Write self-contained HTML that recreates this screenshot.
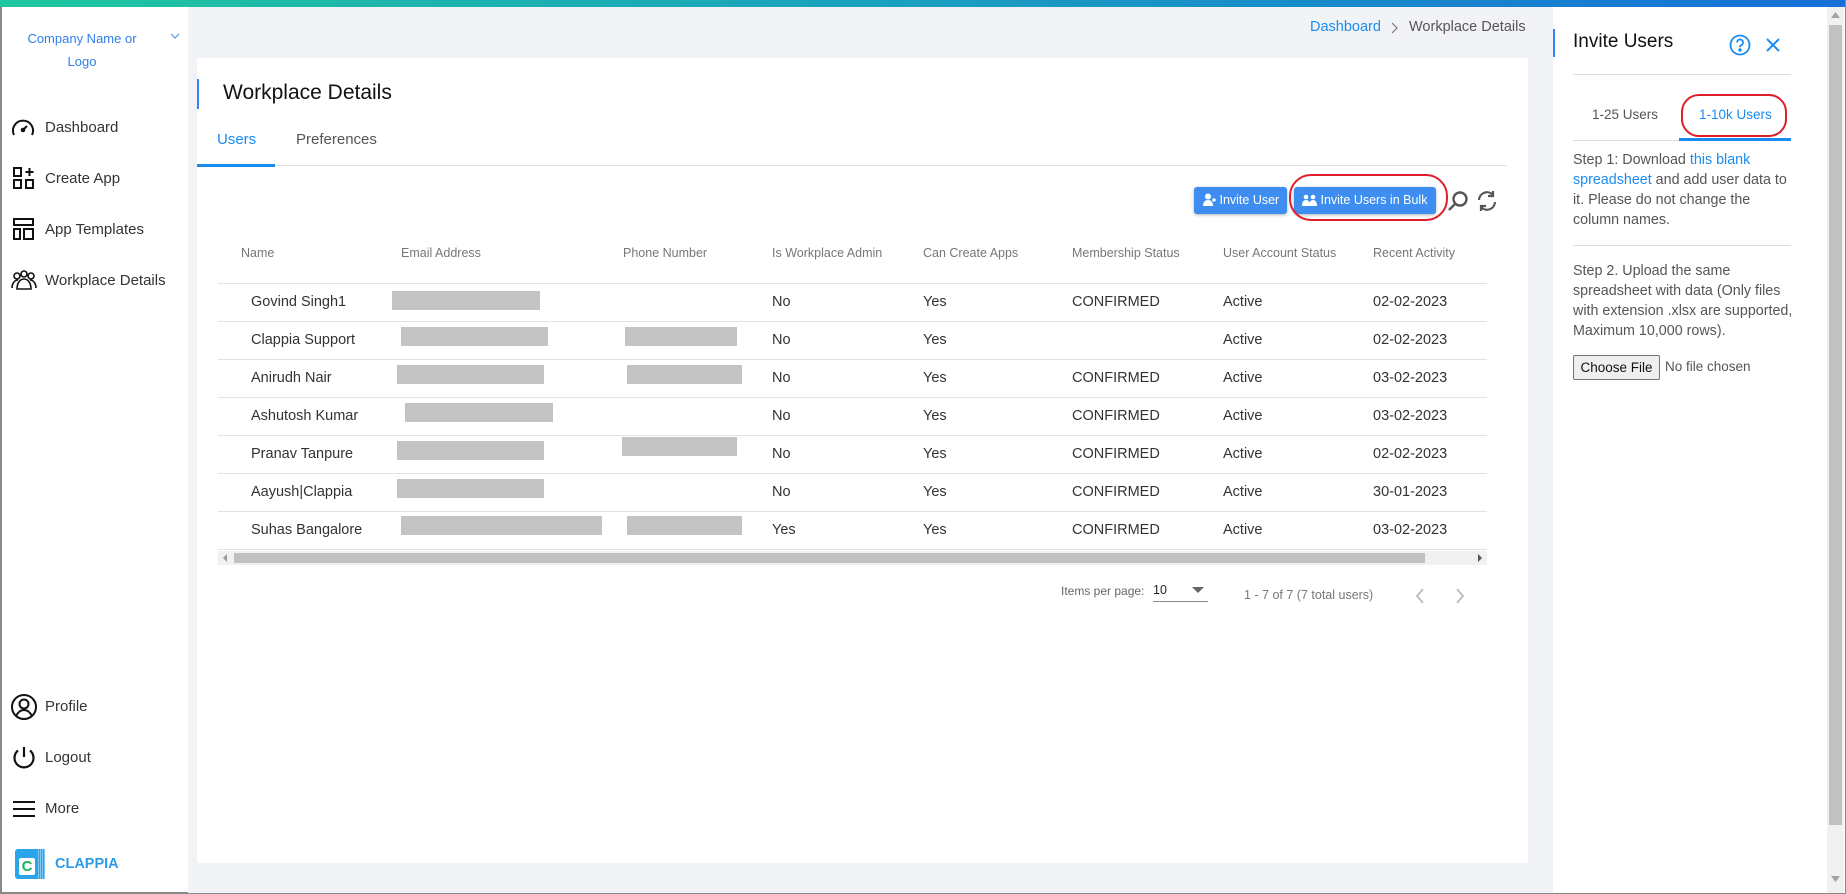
<!DOCTYPE html>
<html><head><meta charset="utf-8"><style>
*{box-sizing:border-box;margin:0;padding:0}
body{width:1846px;height:894px;overflow:hidden;background:#f2f3f6;font-family:"Liberation Sans",sans-serif;position:relative;color:#333}
.a{position:absolute;white-space:nowrap}
.top{left:0;top:0;width:1846px;height:7px;background:linear-gradient(90deg,#1fc79e,#1a9fc0 50%,#1670d8)}
.side{left:0;top:7px;width:188px;height:887px;background:#fff;border-left:2px solid #8a8a8a;border-bottom:2px solid #8a8a8a}
.nav{font-size:15px;color:#333}
.card{left:197px;top:58px;width:1331px;height:805px;background:#fff}
.th{font-size:12.5px;color:#777;top:246px}
.td{font-size:14.5px;color:#333}
.hl{left:218px;width:1269px;height:1px;background:#e2e2e2}
.red{background:#c3c3c3;height:19px}
.btn{background:#3d8ef0;color:#fff;font-size:12.5px;border-radius:3px;height:27px;top:187px;line-height:27px;box-shadow:0 1px 3px rgba(0,0,0,.3)}
.panel{left:1553px;top:7px;width:257px;height:887px;background:#fff}
.pt{font-size:14.3px;color:#555;line-height:20px;width:222px;white-space:normal}
.blue{color:#1a8cf0}
</style></head><body>
<div class="a top"></div>
<div class="a side"></div>
<div class="a" style="left:26px;top:27px;font-size:13px;color:#2f7fe8;text-align:center;width:112px;line-height:23px">Company Name or<br>Logo</div>
<svg class="a" style="left:170px;top:32px" width="10" height="8"><path d="M1 2l4 4 4-4" stroke="#5a8fe0" fill="none" stroke-width="1.2"/></svg>
<svg class="a" style="left:11px;top:115px" width="24" height="24" viewBox="0 0 24 24" fill="none" stroke="#111" stroke-width="2"><path d="M3 20A10 10 0 1 1 21 20"/><path d="M12 15l4-4"/><circle cx="12" cy="15" r="1.3" fill="#111"/></svg>
<div class="a nav" style="left:45px;top:119px">Dashboard</div>
<svg class="a" style="left:13px;top:167px" width="22" height="22" viewBox="0 0 22 22" fill="none" stroke="#111" stroke-width="2"><rect x="1" y="1" width="7" height="8"/><rect x="1" y="13" width="7" height="8"/><rect x="13" y="13" width="7" height="8"/><path d="M16.5 1v8M12.5 5h8"/></svg>
<div class="a nav" style="left:45px;top:170px">Create App</div>
<svg class="a" style="left:13px;top:218px" width="22" height="22" viewBox="0 0 22 22" fill="none" stroke="#111" stroke-width="2"><rect x="1" y="1" width="19" height="6"/><rect x="1" y="11" width="6" height="10"/><rect x="11" y="11" width="9" height="10"/></svg>
<div class="a nav" style="left:45px;top:221px">App Templates</div>
<svg class="a" style="left:11px;top:270px" width="26" height="20" viewBox="0 0 26 20" fill="none" stroke="#111" stroke-width="1.6"><circle cx="6" cy="6" r="3"/><circle cx="13" cy="4" r="3"/><circle cx="20" cy="6" r="3"/><path d="M1 18c0-5 3-8 6-8M25 18c0-5-3-8-6-8M6 19c0-6 3-10 7-10s7 4 7 10z"/></svg>
<div class="a nav" style="left:45px;top:272px">Workplace Details</div>
<svg class="a" style="left:11px;top:694px" width="26" height="26" viewBox="0 0 26 26" fill="none" stroke="#111" stroke-width="2"><circle cx="13" cy="13" r="12"/><circle cx="13" cy="10" r="4.5"/><path d="M5 22c2-4 5-6 8-6s6 2 8 6"/></svg>
<div class="a nav" style="left:45px;top:698px">Profile</div>
<svg class="a" style="left:12px;top:746px" width="24" height="24" viewBox="0 0 24 24" fill="none" stroke="#111" stroke-width="2.2"><path d="M12 1v10M6 4.5A9.5 9.5 0 1 0 18 4.5"/></svg>
<div class="a nav" style="left:45px;top:749px">Logout</div>
<svg class="a" style="left:12px;top:800px" width="24" height="18" viewBox="0 0 24 18" stroke="#111" stroke-width="2"><path d="M1 2h22M1 9h22M1 16h22"/></svg>
<div class="a nav" style="left:45px;top:800px">More</div>
<div class="a" style="left:15px;top:849px;width:30px;height:30px;background:#2aa4ea;border-radius:3px"></div>
<div class="a" style="left:38px;top:849px;width:7px;height:30px;background:repeating-linear-gradient(90deg,#7cc8f3 0 1px,#2aa4ea 1px 2px)"></div>
<div class="a" style="left:19px;top:858px;width:16px;height:17px;background:#fff;border-radius:2px;color:#1bb35c;font-weight:bold;font-size:15px;line-height:17px;text-align:center">C</div>
<div class="a" style="left:55px;top:856px;font-size:14.5px;font-weight:bold;color:#2d9ae6">CLAPPIA</div>
<div class="a" style="left:1310px;top:19px;font-size:14.5px;color:#1a8cf0">Dashboard</div>
<svg class="a" style="left:1391px;top:22px" width="8" height="12"><path d="M1 1l5 5-5 5" stroke="#777" fill="none" stroke-width="1.2"/></svg>
<div class="a" style="left:1409px;top:19px;font-size:14.5px;color:#555">Workplace Details</div>
<div class="a card"></div>
<div class="a" style="left:197px;top:79px;width:2px;height:30px;background:#2f86f0"></div>
<div class="a" style="left:223px;top:81px;font-size:21px;color:#111">Workplace Details</div>
<div class="a" style="left:217px;top:131px;font-size:15px;color:#1a8cf0">Users</div>
<div class="a" style="left:296px;top:131px;font-size:15px;color:#555">Preferences</div>
<div class="a" style="left:197px;top:165px;width:1310px;height:1px;background:#e0e0e0"></div>
<div class="a" style="left:197px;top:164px;width:78px;height:3px;background:#1a8cf0"></div>
<div class="a btn" style="left:1194px;width:93px;padding-left:9px">
<svg width="13" height="13" viewBox="0 0 13 13" style="vertical-align:-2px" fill="#fff"><circle cx="5" cy="3.5" r="3"/><path d="M0 13c0-4 2-6 5-6s5 2 5 6z"/><path d="M9 7h4M11 5v4" stroke="#fff" stroke-width="1.4"/></svg> Invite User</div>
<div class="a btn" style="left:1294px;width:142px;padding-left:8px">
<svg width="15" height="12" viewBox="0 0 15 12" style="vertical-align:-2px" fill="#fff"><circle cx="4" cy="3" r="2.3"/><circle cx="11" cy="3" r="2.3"/><path d="M0 12c0-4 1.5-6 4-6s4 2 4 6zM7 12c0-4 1.5-6 4-6s4 2 4 6z"/></svg> Invite Users in Bulk</div>
<div class="a" style="left:1289px;top:174px;width:159px;height:47px;border:2px solid #e01e2a;border-radius:22px"></div>
<svg class="a" style="left:1447px;top:190px" width="22" height="22" viewBox="0 0 22 22" fill="none" stroke="#555" stroke-width="2.4"><circle cx="13" cy="9" r="6.5"/><path d="M8 14l-6 6"/></svg>
<svg class="a" style="left:1476px;top:190px" width="22" height="22" viewBox="0 0 22 22" fill="none" stroke="#555" stroke-width="2.2"><path d="M3 10A8 8 0 0 1 17 5M19 12A8 8 0 0 1 5 17"/><path d="M17 1v5h-5M5 21v-5h5"/></svg>
<div class="a th" style="left:241px">Name</div>
<div class="a th" style="left:401px">Email Address</div>
<div class="a th" style="left:623px">Phone Number</div>
<div class="a th" style="left:772px">Is Workplace Admin</div>
<div class="a th" style="left:923px">Can Create Apps</div>
<div class="a th" style="left:1072px">Membership Status</div>
<div class="a th" style="left:1223px">User Account Status</div>
<div class="a th" style="left:1373px">Recent Activity</div>
<div class="a hl" style="top:283px"></div>
<div class="a hl" style="top:321px"></div>
<div class="a hl" style="top:359px"></div>
<div class="a hl" style="top:397px"></div>
<div class="a hl" style="top:435px"></div>
<div class="a hl" style="top:473px"></div>
<div class="a hl" style="top:511px"></div>
<div class="a hl" style="top:549px"></div>
<div class="a td" style="left:251px;top:294px">Govind Singh1</div><div class="a td" style="left:772px;top:294px">No</div><div class="a td" style="left:923px;top:294px">Yes</div><div class="a td" style="left:1072px;top:294px">CONFIRMED</div><div class="a td" style="left:1223px;top:294px">Active</div><div class="a td" style="left:1373px;top:294px">02-02-2023</div>
<div class="a td" style="left:251px;top:332px">Clappia Support</div><div class="a td" style="left:772px;top:332px">No</div><div class="a td" style="left:923px;top:332px">Yes</div><div class="a td" style="left:1223px;top:332px">Active</div><div class="a td" style="left:1373px;top:332px">02-02-2023</div>
<div class="a td" style="left:251px;top:370px">Anirudh Nair</div><div class="a td" style="left:772px;top:370px">No</div><div class="a td" style="left:923px;top:370px">Yes</div><div class="a td" style="left:1072px;top:370px">CONFIRMED</div><div class="a td" style="left:1223px;top:370px">Active</div><div class="a td" style="left:1373px;top:370px">03-02-2023</div>
<div class="a td" style="left:251px;top:408px">Ashutosh Kumar</div><div class="a td" style="left:772px;top:408px">No</div><div class="a td" style="left:923px;top:408px">Yes</div><div class="a td" style="left:1072px;top:408px">CONFIRMED</div><div class="a td" style="left:1223px;top:408px">Active</div><div class="a td" style="left:1373px;top:408px">03-02-2023</div>
<div class="a td" style="left:251px;top:446px">Pranav Tanpure</div><div class="a td" style="left:772px;top:446px">No</div><div class="a td" style="left:923px;top:446px">Yes</div><div class="a td" style="left:1072px;top:446px">CONFIRMED</div><div class="a td" style="left:1223px;top:446px">Active</div><div class="a td" style="left:1373px;top:446px">02-02-2023</div>
<div class="a td" style="left:251px;top:484px">Aayush|Clappia</div><div class="a td" style="left:772px;top:484px">No</div><div class="a td" style="left:923px;top:484px">Yes</div><div class="a td" style="left:1072px;top:484px">CONFIRMED</div><div class="a td" style="left:1223px;top:484px">Active</div><div class="a td" style="left:1373px;top:484px">30-01-2023</div>
<div class="a td" style="left:251px;top:522px">Suhas Bangalore</div><div class="a td" style="left:772px;top:522px">Yes</div><div class="a td" style="left:923px;top:522px">Yes</div><div class="a td" style="left:1072px;top:522px">CONFIRMED</div><div class="a td" style="left:1223px;top:522px">Active</div><div class="a td" style="left:1373px;top:522px">03-02-2023</div>
<div class="a red" style="left:392px;top:291px;width:148px"></div>
<div class="a red" style="left:401px;top:327px;width:147px"></div><div class="a red" style="left:625px;top:327px;width:112px"></div>
<div class="a red" style="left:397px;top:365px;width:147px"></div><div class="a red" style="left:627px;top:365px;width:115px"></div>
<div class="a red" style="left:405px;top:403px;width:148px"></div>
<div class="a red" style="left:397px;top:441px;width:147px"></div><div class="a red" style="left:622px;top:437px;width:115px"></div>
<div class="a red" style="left:397px;top:479px;width:147px"></div>
<div class="a red" style="left:401px;top:516px;width:201px"></div><div class="a red" style="left:627px;top:516px;width:115px"></div>
<div class="a" style="left:218px;top:551px;width:1269px;height:14px;background:#f1f1f1"></div>
<div class="a" style="left:234px;top:553px;width:1191px;height:10px;background:#c1c1c1"></div>
<svg class="a" style="left:222px;top:554px" width="6" height="8"><path d="M5 0v8L1 4z" fill="#999"/></svg>
<svg class="a" style="left:1477px;top:554px" width="6" height="8"><path d="M1 0v8l4-4z" fill="#555"/></svg>
<div class="a" style="left:1061px;top:584px;font-size:12px;color:#666">Items per page:</div>
<div class="a" style="left:1153px;top:583px;font-size:12.5px;color:#222">10</div>
<svg class="a" style="left:1192px;top:587px" width="12" height="6"><path d="M0 0h12L6 6z" fill="#666"/></svg>
<div class="a" style="left:1153px;top:601px;width:55px;height:1px;background:#888"></div>
<div class="a" style="left:1244px;top:588px;font-size:12.5px;color:#777">1 - 7 of 7 (7 total users)</div>
<svg class="a" style="left:1415px;top:588px" width="10" height="16"><path d="M8 1L2 8l6 7" stroke="#bbb" fill="none" stroke-width="1.8"/></svg>
<svg class="a" style="left:1455px;top:588px" width="10" height="16"><path d="M2 1l6 7-6 7" stroke="#bbb" fill="none" stroke-width="1.8"/></svg>
<div class="a panel"></div>
<div class="a" style="left:1553px;top:29px;width:2px;height:28px;background:#2f86f0"></div>
<div class="a" style="left:1573px;top:31px;font-size:19px;color:#111">Invite Users</div>
<svg class="a" style="left:1729px;top:34px" width="22" height="22" viewBox="0 0 22 22" fill="none" stroke="#1a8cf0" stroke-width="1.8"><circle cx="11" cy="11" r="9.5"/><path d="M8 8.5a3 3 0 1 1 4 2.8c-.8.4-1 1-1 2"/><circle cx="11" cy="16" r=".8" fill="#1a8cf0"/></svg>
<svg class="a" style="left:1766px;top:38px" width="14" height="14" stroke="#1a8cf0" stroke-width="2"><path d="M1 1l12 12M13 1L1 13"/></svg>
<div class="a" style="left:1573px;top:74px;width:218px;height:1px;background:#ddd"></div>
<div class="a" style="left:1592px;top:107px;font-size:13.5px;color:#555">1-25 Users</div>
<div class="a" style="left:1699px;top:107px;font-size:13.5px;color:#1a8cf0">1-10k Users</div>
<div class="a" style="left:1573px;top:140px;width:218px;height:1px;background:#ddd"></div>
<div class="a" style="left:1679px;top:138px;width:112px;height:3px;background:#1a8cf0"></div>
<div class="a" style="left:1681px;top:94px;width:106px;height:43px;border:2px solid #e01e2a;border-radius:18px"></div>
<div class="a pt" style="left:1573px;top:150px">Step 1: Download <span class="blue">this blank spreadsheet</span> and add user data to<br>it. Please do not change the column names.</div>
<div class="a" style="left:1573px;top:245px;width:218px;height:1px;background:#ddd"></div>
<div class="a pt" style="left:1573px;top:261px">Step 2. Upload the same spreadsheet with data (Only files with extension .xlsx are supported, Maximum 10,000 rows).</div>
<div class="a" style="left:1573px;top:355px;width:87px;height:25px;background:#efefef;border:1px solid #767676;border-radius:2px;font-size:13.5px;color:#111;text-align:center;line-height:23px">Choose File</div>
<div class="a" style="left:1665px;top:359px;font-size:13.5px;color:#555">No file chosen</div>
<div class="a" style="left:1810px;top:7px;width:36px;height:887px;background:#fff"></div>
<div class="a" style="left:1827px;top:7px;width:17px;height:887px;background:#f1f1f1"></div>
<div class="a" style="left:1829px;top:25px;width:13px;height:800px;background:#c1c1c1"></div>
<svg class="a" style="left:1831px;top:12px" width="9" height="6"><path d="M0 6h9L4.5 0z" fill="#a3a3a3"/></svg>
<svg class="a" style="left:1831px;top:876px" width="9" height="6"><path d="M0 0h9L4.5 6z" fill="#a3a3a3"/></svg>
<div class="a" style="left:1845px;top:0;width:1px;height:894px;background:#888"></div>
<div class="a" style="left:0;top:893px;width:1846px;height:1px;background:#888"></div>
</body></html>
